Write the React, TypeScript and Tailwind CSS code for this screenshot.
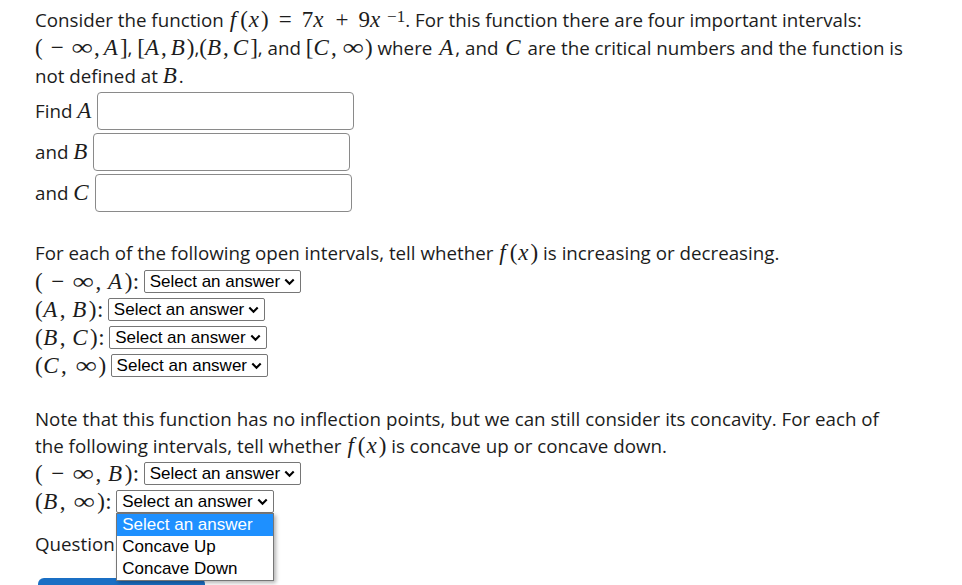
import type { ReactNode } from 'react';

const serif = "font-['Liberation_Serif','DejaVu_Serif',serif]";
const arial = "font-['Liberation_Sans',Arial,sans-serif]";

// inline math inside paragraphs
function M({ children }: { children: ReactNode }) {
  return <span className={`${serif} text-[23px] leading-none`}>{children}</span>;
}

function V({ children }: { children: ReactNode }) {
  return <i className="pr-[2px]">{children}</i>;
}

function Cm() {
  return <span className="mr-[4px]">,</span>;
}

// f(x) with computer-modern-like spacing
function Fx() {
  return (
    <>
      <i className="pl-[1px] pr-[4px]">f</i>(<i className="pl-[1px] pr-[2px]">x</i>)
    </>
  );
}

// binary operator with math spacing
function Op({ children }: { children: ReactNode }) {
  return <span className="mx-[10px]">{children}</span>;
}

function Inf() {
  return <span className="inline-block px-[4px] scale-x-[1.3]">∞</span>;
}

function Neg() {
  return <span className="ml-[8px] mr-[6px]">−</span>;
}

function Chevron() {
  return (
    <svg width="11" height="8" viewBox="0 0 11 8" className="ml-[4px] mt-[1px]">
      <path d="M1.3 1.5 L5.5 5.7 L9.7 1.5" fill="none" stroke="#000" strokeWidth="2.1" />
    </svg>
  );
}

function SelectBox() {
  return (
    <span
      className={`inline-flex items-center h-[23px] px-[5px] border border-[#767676] rounded-[2px] bg-white text-[17px] leading-none text-black ${arial}`}
    >
      Select an answer
      <Chevron />
    </span>
  );
}

function AnswerInput({ label }: { label: ReactNode }) {
  return (
    <div className="flex items-center h-[38px]">
      <span className="mr-[4px]">{label}</span>
      <div className="h-[38px] w-[257px] border border-[#8a8a8a] rounded-[4px] bg-white" />
    </div>
  );
}

// interval row: label math is set a little looser than inline math
function Row({ label, children }: { label: ReactNode; children: ReactNode }) {
  return (
    <div className="flex items-center h-[28px]">
      <span className={`${serif} text-[23px] leading-none tracking-[0.5px]`}>{label}</span>
      <span className="ml-[4px] relative flex">{children}</span>
    </div>
  );
}

export default function App() {
  return (
    <div className="min-h-[585px] bg-white overflow-hidden px-[35px] pt-[6px] text-[18.75px] leading-[28px] text-[#1c1c1c] font-['Open_Sans','Noto_Sans',sans-serif]">
      <div className="whitespace-nowrap">
        Consider the function{' '}
        <M>
          <Fx />
          <Op>=</Op>7<V>x</V>
          <Op>+</Op>9<V>x</V>
          <sup className="text-[17px] ml-[5px] relative top-[-5px]">−1</sup>
        </M>
        . For this function there are four important intervals:
      </div>
      <div className="whitespace-nowrap">
        <M>
          (<Neg />
          <Inf />
          <Cm />
          <V>A</V>]
        </M>
        ,{' '}
        <M>
          [<V>A</V>
          <Cm />
          <V>B</V>)
        </M>
        ,
        <M>
          (<V>B</V>
          <Cm />
          <V>C</V>]
        </M>
        , and{' '}
        <M>
          [<V>C</V>
          <Cm />
          <Inf />)
        </M>{' '}
        where{' '}
        <M>
          <i className="px-[2px]">A</i>
        </M>
        , and{' '}
        <M>
          <i className="px-[2px]">C</i>
        </M>{' '}
        are the critical numbers and the function is
      </div>
      <div className="whitespace-nowrap">
        not defined at{' '}
        <M>
          <V>B</V>
        </M>
        .
      </div>

      <div className="mt-[2px] flex flex-col gap-[3px]">
        <AnswerInput
          label={
            <>
              Find{' '}
              <M>
                <V>A</V>
              </M>
            </>
          }
        />
        <AnswerInput
          label={
            <>
              and{' '}
              <M>
                <V>B</V>
              </M>
            </>
          }
        />
        <AnswerInput
          label={
            <>
              and{' '}
              <M>
                <V>C</V>
              </M>
            </>
          }
        />
      </div>

      <div className="mt-[27px] whitespace-nowrap">
        For each of the following open intervals, tell whether{' '}
        <M>
          <Fx />
        </M>{' '}
        is increasing or decreasing.
      </div>
      <Row
        label={
          <>
            (<Neg />
            <Inf />, <V>A</V>):
          </>
        }
      >
        <SelectBox />
      </Row>
      <Row
        label={
          <>
            (<V>A</V>, <V>B</V>):
          </>
        }
      >
        <SelectBox />
      </Row>
      <Row
        label={
          <>
            (<V>B</V>, <V>C</V>):
          </>
        }
      >
        <SelectBox />
      </Row>
      <Row
        label={
          <>
            (<V>C</V>, <Inf />)
          </>
        }
      >
        <SelectBox />
      </Row>

      <div className="mt-[26px] leading-[27px] whitespace-nowrap">
        Note that this function has no inflection points, but we can still consider its concavity. For each of
        <br />
        the following intervals, tell whether{' '}
        <M>
          <Fx />
        </M>{' '}
        is concave up or concave down.
      </div>
      <Row
        label={
          <>
            (<Neg />
            <Inf />, <V>B</V>):
          </>
        }
      >
        <SelectBox />
      </Row>
      <Row
        label={
          <>
            (<V>B</V>, <Inf />
            ):
          </>
        }
      >
        <SelectBox />
        <div
          className={`absolute left-0 top-[23px] z-10 w-full border border-[#767676] bg-white shadow-[2px_2px_4px_rgba(0,0,0,0.3)] text-[17px] leading-[22px] text-black ${arial}`}
        >
          <div className="bg-[#1e90ff] text-white px-[5px]">Select an answer</div>
          <div className="px-[5px]">Concave Up</div>
          <div className="px-[5px]">Concave Down</div>
        </div>
      </Row>

      <div className="mt-[15px]">Question Help:</div>
      <div className="mt-[20px] ml-[3px] h-[36px] w-[167px] rounded-[6px] bg-[#1a6fc4]" />
    </div>
  );
}
